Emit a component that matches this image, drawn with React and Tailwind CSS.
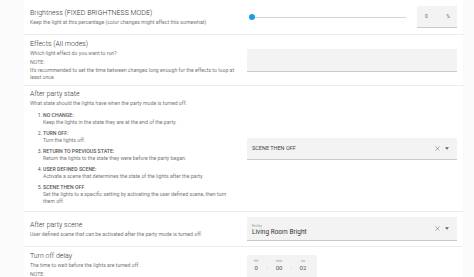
import React from "react";

const Desc = ({ children, className = "" }) => (
  <div className={`text-[5.2px] leading-[7px] text-[#777] ${className}`}>{children}</div>
);

const Title = ({ children }) => (
  <div className="text-[7px] leading-[9px] font-light text-[#333]">{children}</div>
);

const Row = ({ left, right, last }) => (
  <div className={`flex items-center gap-[7px] px-[6px] ${last ? "" : "border-b border-[#ececec]"}`}>
    <div className="w-[210px] py-[4px]">{left}</div>
    <div className="flex-1">{right}</div>
  </div>
);

const ClearAndArrow = () => (
  <div className="flex items-center gap-[5px]">
    <svg width="5" height="5" viewBox="0 0 10 10">
      <path d="M1 1 L9 9 M9 1 L1 9" stroke="#777" strokeWidth="1.2" fill="none" />
    </svg>
    <svg width="4" height="3" viewBox="0 0 8 5">
      <path d="M0 0 L8 0 L4 5 Z" fill="#666" />
    </svg>
  </div>
);

const partyStates = [
  ["NO CHANGE:", "Keep the lights in the state they are at the end of the party."],
  ["TURN OFF:", "Turn the lights off."],
  ["RETURN TO PREVIOUS STATE:", "Return the lights to the state they were before the party began."],
  ["USER DEFINED SCENE:", "Activate a scene that determines the state of the lights after the party."],
  ["SCENE THEN OFF", "Set the lights to a specific setting by activating the user defined scene, then turn them off."],
];

export default function App() {
  return (
    <div className="h-[277px] overflow-hidden bg-[#fafafa] font-['Roboto',sans-serif] flex">
      <div className="ml-[24px] w-[439px] bg-white">
        <Row
          left={
            <div className="pt-[5px] pb-[4px]">
              <Title>Brightness (FIXED BRIGHTNESS MODE)</Title>
              <Desc className="mt-px">Keep the light at this percentage (color changes might affect this somewhat)</Desc>
            </div>
          }
          right={
            <div className="flex items-center">
              <div className="relative flex-1 h-[6px] ml-[2px] mr-[11px] flex items-center">
                <div className="h-px w-full bg-[#d4d4d4]" />
                <div className="absolute left-0 top-0 w-[6px] h-[6px] rounded-full bg-[#1a9de8]" />
              </div>
              <div className="w-[40px] h-[22px] bg-[#f3f3f3] border-b border-[#c9c9c9] flex items-center justify-between pl-[8px] pr-[7px] text-[5px] text-[#666]">
                <span>0</span>
                <span>%</span>
              </div>
            </div>
          }
        />
        <Row
          left={
            <div className="pt-px">
              <Title>Effects (All modes)</Title>
              <Desc className="mt-px">Which light effect do you want to run?</Desc>
              <Desc className="mt-[2px] text-[#555]">NOTE:</Desc>
              <Desc className="mt-px leading-[6.5px]">
                It's recommended to set the time between changes long enough for the effects to loop at least once.
              </Desc>
            </div>
          }
          right={<div className="h-[23px] bg-[#f3f3f3] border-b border-[#c9c9c9]" />}
        />
        <Row
          left={
            <div className="pb-[2px]">
              <Title>After party state</Title>
              <Desc className="mt-px">What state should the lights have when the party mode is turned off.</Desc>
              <ol className="mt-[5px] flex flex-col gap-[4px]">
                {partyStates.map(([name, text], i) => (
                  <li key={name} className="flex">
                    <span className="w-[13px] pr-[1px] text-right text-[5.2px] leading-[7px] text-[#555]">{i + 1}.</span>
                    <div className="flex-1 pr-[2px]">
                      <div className="text-[5.2px] leading-[7px] font-medium text-[#555]">{name}</div>
                      <Desc className="leading-[6.5px]">{text}</Desc>
                    </div>
                  </li>
                ))}
              </ol>
            </div>
          }
          right={
            <div className="h-[22px] bg-[#f3f3f3] border-b border-[#c9c9c9] flex items-center justify-between pl-[5px] pr-[8px]">
              <span className="text-[5.5px] text-[#444]">SCENE THEN OFF</span>
              <ClearAndArrow />
            </div>
          }
        />
        <Row
          left={
            <div className="pt-[5px] pb-[4px]">
              <Title>After party scene</Title>
              <Desc className="mt-px">User defined scene that can be activated after the party mode is turned off.</Desc>
            </div>
          }
          right={
            <div className="h-[24px] bg-[#f3f3f3] border-b border-[#c9c9c9] flex items-center justify-between pl-[5px] pr-[8px]">
              <div className="pt-[2px]">
                <div className="text-[4px] leading-[5px] text-[#999]">Entity</div>
                <div className="text-[6.5px] leading-[8px] text-[#333]">Living Room Bright</div>
              </div>
              <ClearAndArrow />
            </div>
          }
        />
        <Row
          last
          left={
            <div className="pt-[1px]">
              <Title>Turn off delay</Title>
              <Desc className="mt-px">The time to wait before the lights are turned off.</Desc>
              <Desc className="mt-[2px] text-[#555]">NOTE:</Desc>
            </div>
          }
          right={
            <div className="w-[70px] h-[24px] mt-[4px] bg-[#f3f3f3] flex items-start px-[7px] pt-[3px] text-[#555]">
              <div className="flex flex-col items-center">
                <span className="text-[4px] leading-[6px] text-[#999]">hh</span>
                <span className="text-[6px] leading-[8px]">0</span>
              </div>
              <span className="text-[5px] leading-[8px] mt-[6px] mx-[8px] text-[#999]">:</span>
              <div className="flex flex-col items-center">
                <span className="text-[4px] leading-[6px] text-[#999]">min</span>
                <span className="text-[6px] leading-[8px]">00</span>
              </div>
              <span className="text-[5px] leading-[8px] mt-[6px] mx-[8px] text-[#999]">:</span>
              <div className="flex flex-col items-center">
                <span className="text-[4px] leading-[6px] text-[#999]">ss</span>
                <span className="text-[6px] leading-[8px]">02</span>
              </div>
            </div>
          }
        />
      </div>
    </div>
  );
}
